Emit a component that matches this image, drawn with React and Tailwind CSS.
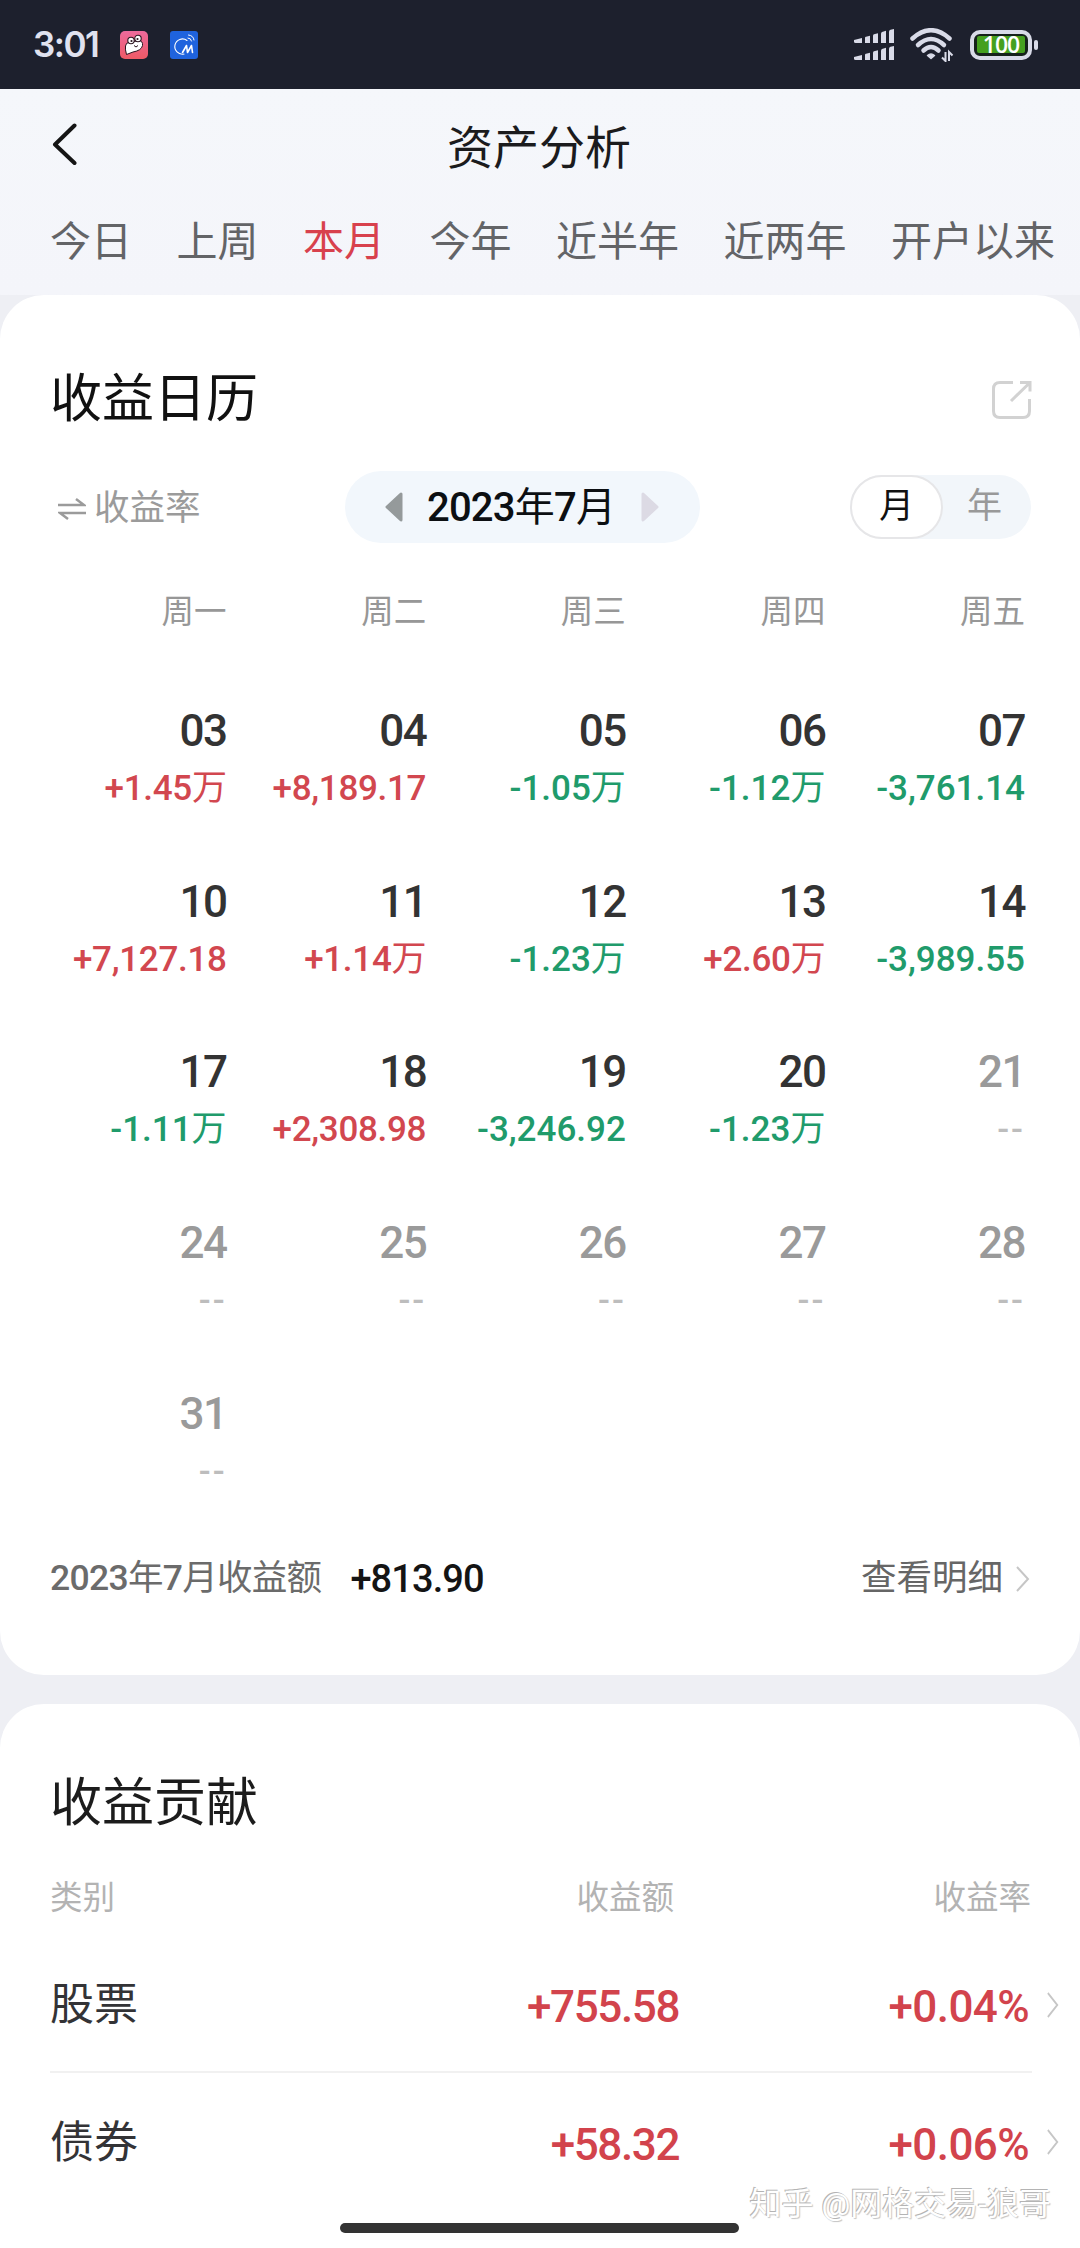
import React, { useState } from "react";
import clsx from "clsx";

const TABS = ["今日", "上周", "本月", "今年", "近半年", "近两年", "开户以来"];
const WEEKDAYS = ["周一", "周二", "周三", "周四", "周五"];

const DAYS = [
  { day: "03", value: "+1.45万" },
  { day: "04", value: "+8,189.17" },
  { day: "05", value: "-1.05万" },
  { day: "06", value: "-1.12万" },
  { day: "07", value: "-3,761.14" },
  { day: "10", value: "+7,127.18" },
  { day: "11", value: "+1.14万" },
  { day: "12", value: "-1.23万" },
  { day: "13", value: "+2.60万" },
  { day: "14", value: "-3,989.55" },
  { day: "17", value: "-1.11万" },
  { day: "18", value: "+2,308.98" },
  { day: "19", value: "-3,246.92" },
  { day: "20", value: "-1.23万" },
  { day: "21" },
  { day: "24" },
  { day: "25" },
  { day: "26" },
  { day: "27" },
  { day: "28" },
  { day: "31" },
];

const CONTRIBUTIONS = [
  { name: "股票", amount: "+755.58", rate: "+0.04%" },
  { name: "债券", amount: "+58.32", rate: "+0.06%" },
];

// Figures are medium weight, the Chinese characters between them stay regular
const Mixed = ({ text }) => (
  <span className="whitespace-nowrap">
    {text.split(/([\u4e00-\u9fff]+)/).map((part, i) => (
      <span key={i} className={i % 2 ? "font-normal" : "font-medium"}>
        {part}
      </span>
    ))}
  </span>
);

const SignalIcon = () => (
  <svg width="40" height="32" viewBox="0 0 40 32" fill="#d9dbe8">
    {[0, 17].map((y) => (
      <g key={y} transform={`translate(0 ${y})`}>
        <path d="M0 11l8-2v5H1.500Q0 14 0 12.500z" />
        <path d="M11 8.500Q11 8 12 7.700l4-1V14h-5z" />
        <path d="M19 6.500Q19 5.500 20 5.200l4-1V14h-5z" />
        <path d="M27 4.500Q27 3.500 28 3l4-1.200V14h-5z" />
        <path d="M35 2.500Q35 1.300 36.500.8L40 0v14h-5z" />
      </g>
    ))}
  </svg>
);

const WifiIcon = () => (
  <svg width="44" height="34" viewBox="0 0 44 34" fill="none" stroke="#d9dbe8">
    <path d="M2.500 10.500Q21-6 39.500 10.500" strokeWidth="4.500" strokeLinecap="round" />
    <path d="M8 17Q21 5 34 17" strokeWidth="4.500" strokeLinecap="round" />
    <path d="M13.500 22.500Q21 15.500 28.500 22.500" strokeWidth="4.500" strokeLinecap="round" />
    <path d="M17.500 27.500Q21 24.500 24.500 27.500L21 30.500z" fill="#d9dbe8" strokeWidth="1.500" strokeLinejoin="round" />
    <path d="M35.500 24v9l-3.500-3.500M39 33v-9l3.500 3.500" strokeWidth="2" />
  </svg>
);

const BatteryIcon = () => (
  <div className="flex items-center gap-0.5">
    <div className="flex h-[30px] w-[62px] items-center justify-center rounded-[10px] border-4 border-[#d9dbe8] bg-[#16221b]">
      <span className="flex h-[17px] w-[48px] items-center justify-center rounded-[2px] bg-[#45a01f] font-['Open_Sans'] text-[23px] leading-none font-semibold tracking-[-1px] text-white">
        100
      </span>
    </div>
    <div className="h-2.5 w-1 rounded-sm bg-[#d9dbe8]" />
  </div>
);

const FrogAppIcon = () => (
  <svg width="28" height="28" viewBox="0 0 28 28">
    <defs>
      <linearGradient id="frog" x1="0" y1="0" x2="0" y2="1">
        <stop offset="0" stopColor="#ee6a9c" />
        <stop offset="1" stopColor="#ee5a66" />
      </linearGradient>
    </defs>
    <rect width="28" height="28" rx="5" fill="url(#frog)" />
    <path
      d="M5.500 15Q6 11.500 9 11.500L19 9.500Q23 10 22.500 14.500Q21.500 19.500 13 21L6.500 23.500Q5 18.500 5.500 15z"
      fill="#fff"
      stroke="#2a1520"
      strokeWidth="1"
    />
    <circle cx="11" cy="9.500" r="3.200" fill="#fff" stroke="#2a1520" strokeWidth="1.100" />
    <circle cx="18" cy="7.500" r="3.200" fill="#fff" stroke="#2a1520" strokeWidth="1.100" />
    <circle cx="11.500" cy="10" r="1.100" fill="#2a1520" />
    <circle cx="17.500" cy="8" r="1.100" fill="#2a1520" />
    <path d="M14 14.500q2 3 4 0" fill="none" stroke="#2a1520" strokeWidth="1" />
  </svg>
);

const MobileAppIcon = () => (
  <svg width="28" height="28" viewBox="0 0 28 28" fill="none" stroke="#fff" strokeLinecap="round">
    <rect width="28" height="28" rx="3" fill="#1f63dd" stroke="none" />
    <path d="M17 9.500A7.600 7.600 0 1 0 14 23" strokeWidth="1.100" />
    <path d="M12.500 21.500l4-7 1 7 4-7 1 7" strokeWidth="1.600" strokeLinejoin="round" />
    <path d="M18 7q3 0 3.500 3M18.500 4q5 .5 5.500 5" strokeWidth="1" />
  </svg>
);

const Chevron = ({ className }) => (
  <svg
    className={className}
    viewBox="0 0 14 26"
    preserveAspectRatio="none"
    fill="none"
    stroke="#c6c6c6"
    strokeWidth="2"
  >
    <path d="M1 1l11 12L1 25" />
  </svg>
);

const StatusBar = () => (
  <div className="flex h-[89px] shrink-0 items-center bg-[#1d202d] pr-[42px] pl-[33px]">
    <span className="w-[87px] font-['Inter'] text-[35px] leading-none font-semibold tracking-[-1.500px] text-[#e0e2ef]">
      3:01
    </span>
    <FrogAppIcon />
    <div className="w-[22px]" />
    <MobileAppIcon />
    <div className="ml-auto flex items-center gap-4">
      <SignalIcon />
      <WifiIcon />
      <BatteryIcon />
    </div>
  </div>
);

const Header = ({ active, onChange }) => (
  <div className="h-[206px] shrink-0 bg-gradient-to-b from-[#f5f7fb] to-[#f4f5fa]">
    <div className="flex h-[116px] items-center pl-[51px]">
      <svg width="26" height="44" viewBox="0 0 26 44" fill="none" stroke="#151515" strokeWidth="4" strokeLinecap="round" strokeLinejoin="round" className="mb-1">
        <path d="M23.500 2.500L4 21.500l19.500 18.500" />
      </svg>
      <h1 className="ml-[370px] pt-0.5 text-[46px] leading-none text-[#1b1b1d]">资产分析</h1>
    </div>
    <div className="flex h-[74px] items-center gap-[44.500px] pl-[50px]">
      {TABS.map((tab) => (
        <button
          key={tab}
          onClick={() => onChange(tab)}
          className={clsx(
            "shrink-0 text-[41px] leading-none",
            tab === active ? "text-[#d8414d]" : "text-[#636467]"
          )}
        >
          {tab}
        </button>
      ))}
    </div>
  </div>
);

const DayCell = ({ day, value }) => (
  <div className="flex h-[100px] flex-col items-end gap-4 pt-px">
    <span
      className={clsx(
        "flex h-11 items-center text-[44px] leading-none font-medium tracking-[-1.500px]",
        value ? "text-[#333333]" : "text-[#9a9a9a]"
      )}
    >
      {day}
    </span>
    <span
      className={clsx(
        "flex h-10 items-center text-[35px] leading-none font-medium",
        !value && "tracking-[2px] text-[#bdbdbd]",
        value?.startsWith("+") && "tracking-[-0.300px] text-[#d2474f]",
        value?.startsWith("-") && "text-[#209b6b]"
      )}
    >
      <Mixed text={value || "--"} />
    </span>
  </div>
);

const CalendarCard = () => {
  const [mode, setMode] = useState("月");

  return (
    <section className="h-[1380px] shrink-0 rounded-[44px] bg-white pt-[75px]">
      <div className="flex h-[60px] items-center justify-between pr-12 pl-[50px]">
        <h2 className="text-[52px] leading-none text-[#111111]">收益日历</h2>
        <svg width="40" height="38" viewBox="0 0 40 38" fill="none" stroke="#d2d2d2" strokeWidth="3">
          <path d="M21 1.500H8Q1.500 1.500 1.500 8v22q0 6.500 6.500 6.500h23q6.500 0 6.500-6.500V18" />
          <path d="M19 20L37 2.500M28 1.500h10v9" />
        </svg>
      </div>

      <div className="mt-[41px] flex h-[72px] items-center">
        <div className="flex w-[345px] items-center gap-2 pt-1 pl-[58px] text-[35.500px] leading-none text-[#9b9b9b]">
          <svg width="28" height="22" viewBox="0 0 28 22" fill="none" stroke="#9b9b9b" strokeWidth="2.500">
            <path d="M0 7h26L18 1M28 15H2l8 6" />
          </svg>
          <span>收益率</span>
        </div>
        <div className="flex h-[72px] w-[355px] items-center rounded-full bg-[#f2f7fc] pl-10">
          <svg width="18" height="30" viewBox="0 0 18 30">
            <path d="M2 15L16 2v26z" fill="#959a9b" stroke="#959a9b" strokeWidth="3" strokeLinejoin="round" />
          </svg>
          <span className="ml-6 w-[189px] pt-0.5 text-[40px] leading-none tracking-[-0.800px] text-[#0c0f12]">
            <Mixed text="2023年7月" />
          </span>
          <svg width="18" height="30" viewBox="0 0 18 30" className="ml-[25px]">
            <path d="M2 2l14 13L2 28z" fill="#dcdae4" stroke="#dcdae4" strokeWidth="3" strokeLinejoin="round" />
          </svg>
        </div>
        <div className="ml-[150px] flex h-16 w-[181px] rounded-full bg-[#f2f6fa]">
          {["月", "年"].map((m) => (
            <button
              key={m}
              onClick={() => setMode(m)}
              className={clsx(
                "h-16 rounded-full pb-0.5 text-[35px] leading-none",
                m === mode
                  ? "w-[93px] border-2 border-[#e6e6e8] bg-white text-[#111111]"
                  : "w-[83px] text-[#999999]"
              )}
            >
              {m}
            </button>
          ))}
        </div>
      </div>

      <div className="mt-[49px] grid w-[1025px] grid-cols-5 pl-[27px]">
        {WEEKDAYS.map((d) => (
          <span key={d} className="flex h-10 items-center justify-end text-[32.500px] leading-none text-[#979797]">
            {d}
          </span>
        ))}
      </div>
      <div className="mt-[76px] grid w-[1025px] grid-cols-5 gap-y-[70.700px] pl-[27px]">
        {DAYS.map((d) => (
          <DayCell key={d.day} {...d} />
        ))}
      </div>

      <div className="mt-[68px] flex h-10 items-center pr-[50px] pl-[50px] leading-none">
        <span className="text-[35.500px] tracking-[-0.700px] text-[#6b6b6b]">
          <Mixed text="2023年7月收益额" />
        </span>
        <span className="ml-[29px] text-[38px] font-medium tracking-[-0.900px] text-[#141414]">+813.90</span>
        <button className="ml-auto flex items-center gap-[13px] text-[35.500px] leading-none text-[#666666]">
          查看明细
          <Chevron className="h-[26px] w-[14px]" />
        </button>
      </div>
    </section>
  );
};

const ContributionCard = () => (
  <section className="mt-[29px] h-[600px] shrink-0 rounded-t-[44px] bg-white pt-[70px] pl-[50px]">
    <h2 className="flex h-[60px] items-center text-[52px] leading-none text-[#1c1c1c]">收益贡献</h2>
    <div className="mt-11 flex h-10 items-center text-[32.500px] leading-none text-[#b3b3b3]">
      <span className="w-[200px]">类别</span>
      <span className="w-[424px] text-right">收益额</span>
      <span className="w-[357px] text-right">收益率</span>
    </div>
    <div className="mt-[18px]">
      {CONTRIBUTIONS.map((item, i) => (
        <div key={item.name} className="flex h-[137px] items-center leading-none">
          <div
            className={clsx(
              "flex h-full w-[982px] items-center",
              i < CONTRIBUTIONS.length - 1 && "border-b-2 border-[#f1f1f1]"
            )}
          >
            <span className="w-[200px] pt-0.5 text-[44px] text-[#333336]">{item.name}</span>
            <span className="w-[429px] pt-1.5 text-right text-[44px] font-medium tracking-[-1.400px] text-[#d2434c]">
              {item.amount}
            </span>
            <span className="w-[350px] pt-1.5 text-right text-[44px] font-medium tracking-[-0.600px] text-[#d2434c]">
              {item.rate}
            </span>
          </div>
          <Chevron className="ml-[15px] h-[26px] w-3" />
        </div>
      ))}
    </div>
  </section>
);

const App = () => {
  const [tab, setTab] = useState("本月");

  return (
    <div className="relative flex h-[2248px] w-[1080px] flex-col overflow-hidden bg-[#eeeff4] font-['Roboto','Noto_Sans_CJK_SC',sans-serif]">
      <StatusBar />
      <Header active={tab} onChange={setTab} />
      <CalendarCard />
      <ContributionCard />
      <span className="absolute right-[29px] bottom-[28px] text-[32px] leading-none whitespace-nowrap text-white [text-shadow:-1px_-1px_0_#b4b4b4,1px_1px_1px_#c4c4c4]">
        知乎 @网格交易-狼哥
      </span>
      <div className="absolute bottom-[15px] left-[340px] h-2.5 w-[399px] rounded-full bg-[#333333]" />
    </div>
  );
};

export default App;
